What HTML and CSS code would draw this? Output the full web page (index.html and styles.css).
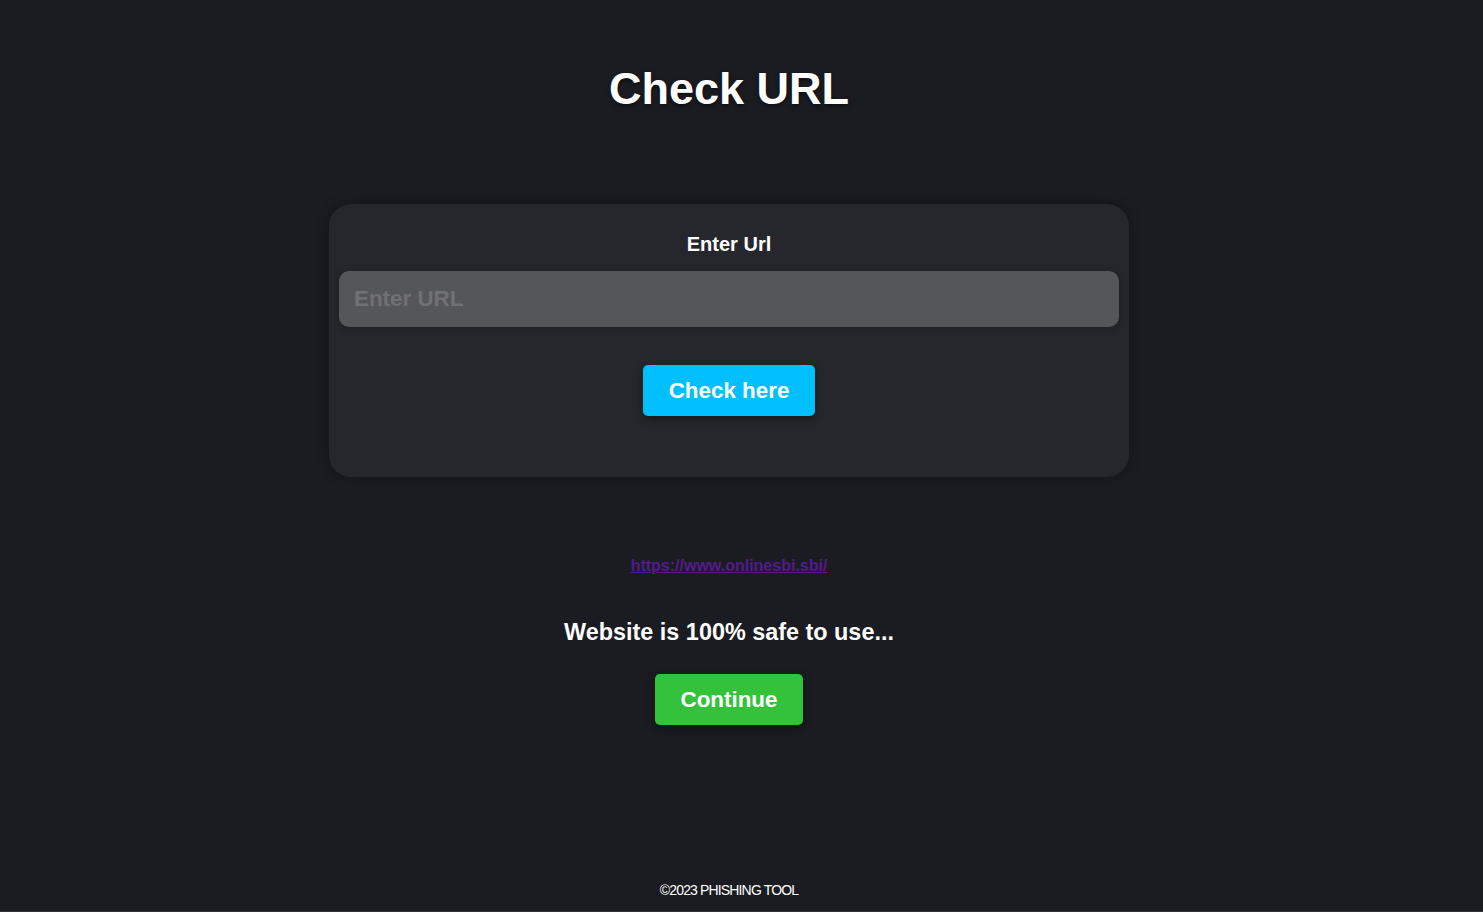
FILE: index.html
```html
<!DOCTYPE html>
<html lang="en">
<head>
<meta charset="utf-8">
<title>Check URL</title>
<link rel="stylesheet" href="styles.css">
</head>
<body>
<div class="page">
  <h1 class="title">Check URL</h1>
  <form class="card" onsubmit="return false">
    <label class="label" for="url">Enter Url</label>
    <input class="url-input" id="url" type="text" placeholder="Enter URL">
    <button class="btn btn-check" type="submit">Check here</button>
  </form>
  <a class="result-link" href="https://www.onlinesbi.sbi/">https://www.onlinesbi.sbi/</a>
  <h2 class="verdict">Website is 100% safe to use...</h2>
  <button class="btn btn-continue" type="button">Continue</button>
  <footer class="footer">©2023 PHISHING TOOL</footer>
</div>
</body>
</html>
```
FILE: styles.css
```css
html, body {
  margin: 0;
  padding: 0;
  background: #1b1c21;
}
body {
  font-family: "Liberation Sans", Arial, sans-serif;
  color: #ffffff;
  height: 912px;
  overflow: hidden;
}
.page {
  width: 1458px;
  display: flex;
  flex-direction: column;
  align-items: center;
  padding-top: 63px;
  box-sizing: border-box;
  height: 912px;
}
.title {
  margin: 0;
  font-size: 45px;
  line-height: 52px;
  font-weight: 700;
  text-shadow: 0 2px 4px rgba(0, 0, 0, 0.5);
}
.card {
  margin-top: 89px;
  width: 800px;
  box-sizing: border-box;
  background: #26272c;
  border-radius: 22px;
  padding: 28px 10px 61px;
  display: flex;
  flex-direction: column;
  align-items: center;
  box-shadow: 0 0 12px rgba(0, 0, 0, 0.35);
}
.label {
  font-size: 20px;
  line-height: 24px;
  font-weight: 700;
}
.url-input {
  margin-top: 15px;
  width: 100%;
  height: 56px;
  box-sizing: border-box;
  border: none;
  outline: none;
  border-radius: 10px;
  background: #55565a;
  padding: 0 15px;
  font-family: "Liberation Sans", Arial, sans-serif;
  font-size: 22.4px;
  font-weight: 700;
  color: #ffffff;
  box-shadow: 0 2px 8px rgba(0, 0, 0, 0.25);
}
.url-input::placeholder {
  color: #717174;
}
.btn {
  border: none;
  border-radius: 5px;
  font-family: "Liberation Sans", Arial, sans-serif;
  font-size: 22.4px;
  font-weight: 700;
  line-height: 27px;
  color: #ffffff;
  padding: 12px 0;
  cursor: pointer;
  box-shadow: 0 3px 8px rgba(0, 0, 0, 0.4);
}
.btn-check {
  margin-top: 38px;
  width: 172px;
  background: #00bfff;
}
.result-link {
  margin-top: 79px;
  font-size: 16px;
  line-height: 20px;
  font-weight: 700;
  color: #551a8b;
}
.verdict {
  margin: 42px 0 0;
  font-size: 23.4px;
  line-height: 28px;
  font-weight: 700;
}
.btn-continue {
  margin-top: 28px;
  width: 148px;
  background: #33c23a;
}
.footer {
  margin-top: auto;
  width: 1483px;
  align-self: flex-start;
  text-align: center;
  box-sizing: border-box;
  padding-right: 25px;
  font-size: 14px;
  line-height: 18px;
  letter-spacing: -0.85px;
  padding-bottom: 12px;
  border-bottom: 1px solid #30353a;
}
```
